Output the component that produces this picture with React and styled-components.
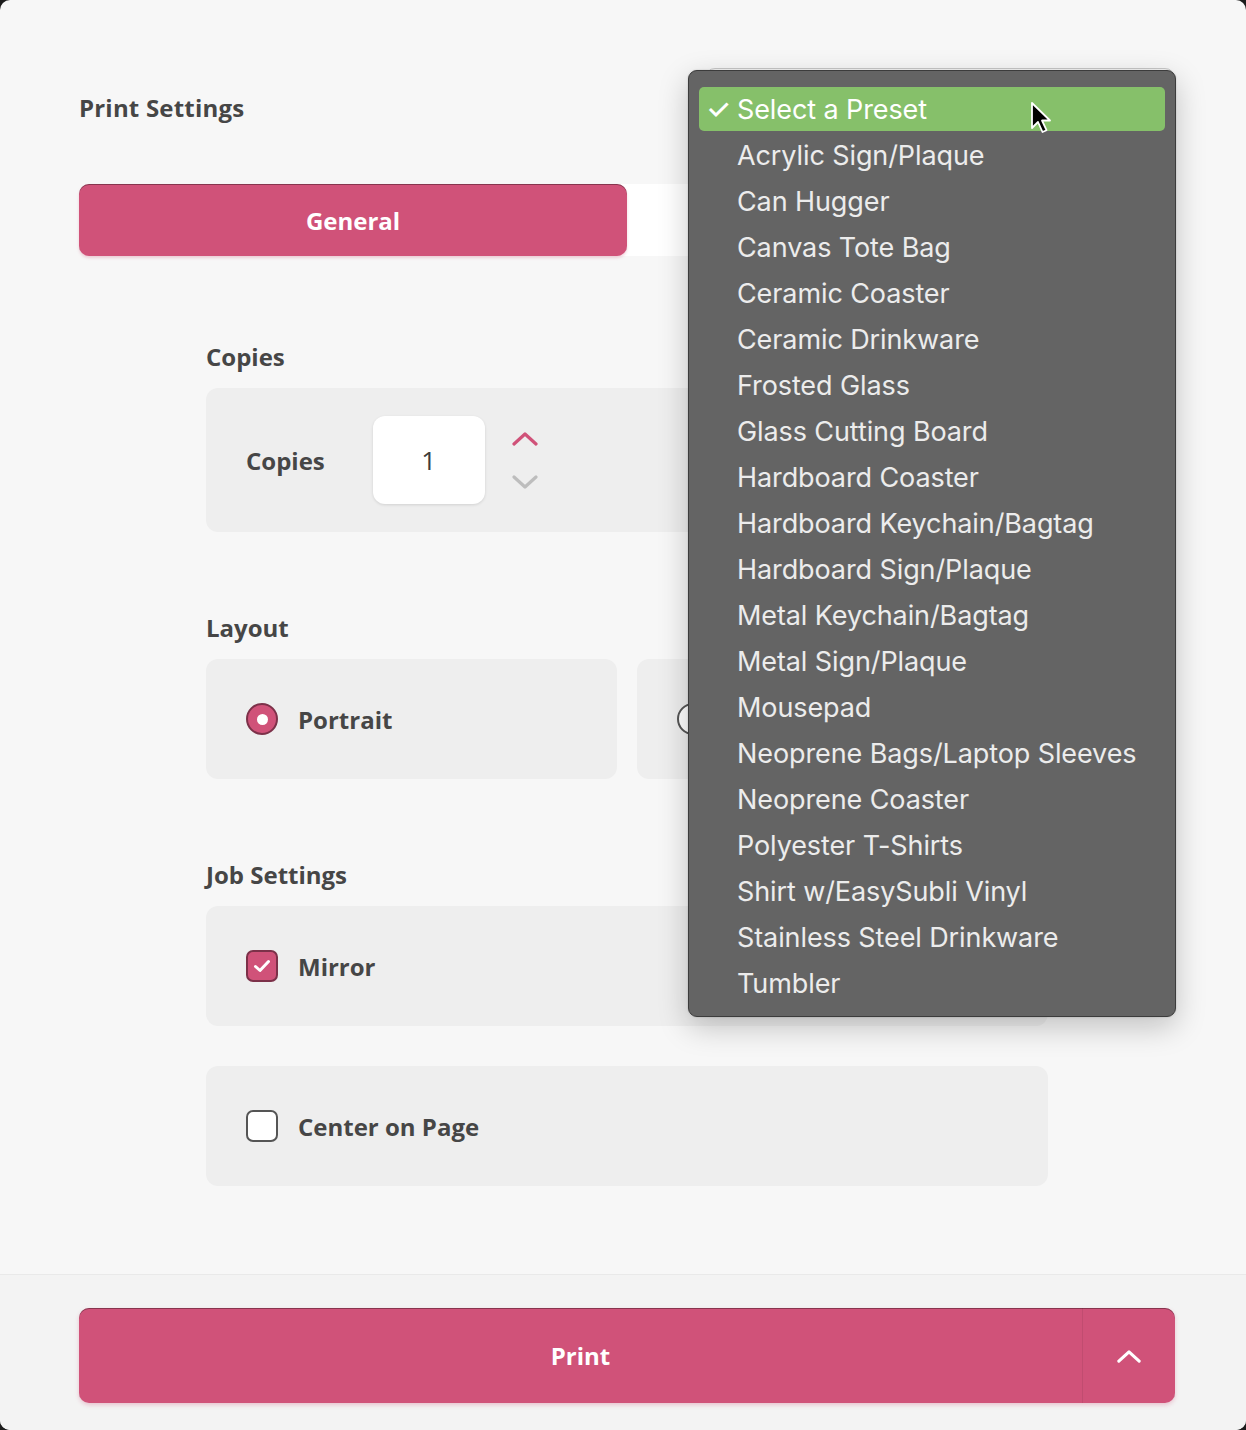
import React from "react";
import styled, { createGlobalStyle } from "styled-components";

const PINK = "#d05279";
const TEXT = "#464646";

const Global = createGlobalStyle`
  html, body { margin: 0; padding: 0; background: #1c1c1c; }
  * { box-sizing: border-box; }
  #root { height: 1430px; }
`;

const Window = styled.div`
  height: 1430px;
  display: flex;
  flex-direction: column;
  background: #f7f7f7;
  border-radius: 10px;
  overflow: hidden;
  font-family: "Open Sans", "Noto Sans", sans-serif;
  color: ${TEXT};
`;

const Main = styled.div`
  flex: 1;
  padding: 68px 71px 0 79px;
  display: flex;
  flex-direction: column;
`;

const HeaderRow = styled.div`
  height: 80px;
  display: flex;
  align-items: center;
  justify-content: space-between;
`;

const Title = styled.h1`
  margin: 0;
  font-size: 24px;
  font-weight: 700;
  line-height: 30px;
  letter-spacing: 0.2px;
  color: ${TEXT};
`;

const SelectWrap = styled.div`
  position: relative;
  width: 470px;
  height: 80px;
  align-self: flex-start;
`;

const SelectBox = styled.div`
  width: 100%;
  height: 100%;
  background: #fff;
  border: 1px solid #c9c9c9;
  border-radius: 10px;
`;

const Menu = styled.ul`
  position: absolute;
  left: -17px;
  top: 2px;
  width: 488px;
  margin: 0;
  padding: 16px 10px 11px;
  list-style: none;
  background: #646464;
  border: 1px solid #3c3c3c;
  border-radius: 9px;
  box-shadow: 0 10px 30px rgba(0, 0, 0, 0.22), 0 0 2px rgba(0, 0, 0, 0.2);
  display: flex;
  flex-direction: column;
  gap: 2px;
  z-index: 10;
`;

const MenuItem = styled.li`
  position: relative;
  height: 44px;
  display: flex;
  align-items: center;
  padding-left: 38px;
  border-radius: 5px;
  font-family: Inter, "Liberation Sans", sans-serif;
  font-size: 27px;
  letter-spacing: -0.1px;
  color: ${(p) => (p.$selected ? "#fff" : "#ececec")};
  background: ${(p) => (p.$selected ? "#86c06a" : "transparent")};
  white-space: nowrap;
`;

const Check = styled.span`
  position: absolute;
  left: 7px;
  top: 50%;
  transform: translateY(-50%);
  font-size: 28px;
  font-weight: 500;
  line-height: 1;
`;

const Cursor = styled.svg`
  position: absolute;
  left: 325px;
  top: 33px;
  z-index: 20;
  pointer-events: none;
`;

const Tabs = styled.div`
  margin-top: 36px;
  height: 72px;
  display: grid;
  grid-template-columns: 1fr 1fr;
  background: #fff;
  border-radius: 10px;
`;

const Tab = styled.div`
  display: flex;
  align-items: center;
  justify-content: center;
  border-radius: 10px;
  font-size: 24px;
  font-weight: 700;
  color: ${(p) => (p.$active ? "#fff" : TEXT)};
  background: ${(p) => (p.$active ? PINK : "transparent")};
  box-shadow: ${(p) =>
    p.$active ? "inset 0 1px 0 rgba(0,0,0,0.35), 0 2px 3px rgba(208,82,121,0.25)" : "none"};
`;

const Content = styled.div`
  width: 842px;
  margin-left: 127px;
  padding-top: 86px;
  display: flex;
  flex-direction: column;
`;

const Section = styled.section`
  display: flex;
  flex-direction: column;
  gap: 40px;
  & + & {
    margin-top: 81px;
  }
`;

const SectionHead = styled.div`
  display: flex;
  flex-direction: column;
  gap: 16px;
`;

const Heading = styled.h2`
  margin: 0;
  font-size: 24px;
  line-height: 30px;
  font-weight: 700;
  color: ${TEXT};
`;

const Card = styled.div`
  height: ${(p) => p.$h || 120}px;
  background: #eeeeee;
  border-radius: 12px;
  display: flex;
  align-items: center;
  padding-left: 40px;
  gap: ${(p) => p.$gap || 20}px;
`;

const CardGrid = styled.div`
  display: grid;
  grid-template-columns: 1fr 1fr;
  gap: 20px;
`;

const Label = styled.span`
  font-size: 24px;
  font-weight: 700;
  color: ${TEXT};
`;

const NumberBox = styled.div`
  width: 112px;
  height: 88px;
  margin-left: 28px;
  background: #fff;
  border-radius: 12px;
  box-shadow: 0 1px 3px rgba(0, 0, 0, 0.12);
  display: flex;
  align-items: center;
  justify-content: center;
  font-family: "Open Sans", sans-serif;
  font-size: 26px;
  color: #3c3c3c;
`;

const Stepper = styled.div`
  display: flex;
  flex-direction: column;
  gap: 29px;
  margin-left: 7px;
`;

const Radio = styled.span`
  width: 32px;
  height: 32px;
  border-radius: 50%;
  flex: none;
  display: flex;
  align-items: center;
  justify-content: center;
  background: ${(p) => (p.$on ? PINK : "#fff")};
  border: 2px solid ${(p) => (p.$on ? "#7c3149" : "#555")};
  &::after {
    content: "";
    width: 11px;
    height: 11px;
    border-radius: 50%;
    background: #fff;
    display: ${(p) => (p.$on ? "block" : "none")};
  }
`;

const Box = styled.span`
  width: 32px;
  height: 32px;
  flex: none;
  border-radius: 7px;
  display: flex;
  align-items: center;
  justify-content: center;
  background: ${(p) => (p.$on ? PINK : "#fff")};
  border: 2px solid ${(p) => (p.$on ? "#7c3149" : "#555")};
`;

const Footer = styled.footer`
  height: 156px;
  border-top: 1px solid #e9e9e9;
  background: #f3f3f3;
  padding: 33px 71px 27px 79px;
`;

const PrintButton = styled.div`
  height: 95px;
  display: flex;
  background: ${PINK};
  border-radius: 10px;
  box-shadow: inset 0 1px 0 rgba(0, 0, 0, 0.35), 0 2px 4px rgba(208, 82, 121, 0.3);
  color: #fff;
`;

const PrintLabel = styled.div`
  flex: 1;
  display: flex;
  align-items: center;
  justify-content: center;
  font-size: 24px;
  font-weight: 700;
`;

const PrintToggle = styled.div`
  width: 93px;
  border-left: 1px solid rgba(0, 0, 0, 0.07);
  display: flex;
  align-items: center;
  justify-content: center;
`;

const presets = [
  "Select a Preset",
  "Acrylic Sign/Plaque",
  "Can Hugger",
  "Canvas Tote Bag",
  "Ceramic Coaster",
  "Ceramic Drinkware",
  "Frosted Glass",
  "Glass Cutting Board",
  "Hardboard Coaster",
  "Hardboard Keychain/Bagtag",
  "Hardboard Sign/Plaque",
  "Metal Keychain/Bagtag",
  "Metal Sign/Plaque",
  "Mousepad",
  "Neoprene Bags/Laptop Sleeves",
  "Neoprene Coaster",
  "Polyester T-Shirts",
  "Shirt w/EasySubli Vinyl",
  "Stainless Steel Drinkware",
  "Tumbler",
];

const Chevron = ({ up, color, w = 26, h = 15, sw = 3.2 }) => (
  <svg width={w} height={h} viewBox="0 0 26 15" fill="none">
    <path
      d={up ? "M2 13 L13 3 L24 13" : "M2 2 L13 12 L24 2"}
      stroke={color}
      strokeWidth={sw}
      strokeLinecap="round"
      strokeLinejoin="round"
    />
  </svg>
);

export default function App() {
  return (
    <>
      <Global />
      <Window>
        <Main>
          <HeaderRow>
            <Title>Print Settings</Title>
            <SelectWrap>
              <SelectBox />
              <Menu>
                {presets.map((p, i) => (
                  <MenuItem key={p} $selected={i === 0}>
                    {i === 0 && <Check>✓</Check>}
                    {p}
                  </MenuItem>
                ))}
              </Menu>
              <Cursor width="24" height="36" viewBox="0 0 24 36">
                <path
                  d="M2 2 L2 27 L8 21 L12.5 31 L16.5 29.2 L12 19.5 L20 19.5 Z"
                  fill="#000"
                  stroke="#fff"
                  strokeWidth="1.8"
                  strokeLinejoin="round"
                />
              </Cursor>
            </SelectWrap>
          </HeaderRow>

          <Tabs>
            <Tab $active>General</Tab>
            <Tab />
          </Tabs>

          <Content>
            <Section>
              <SectionHead>
                <Heading>Copies</Heading>
                <Card $h={144}>
                  <Label>Copies</Label>
                  <NumberBox>1</NumberBox>
                  <Stepper>
                    <Chevron up color={PINK} />
                    <Chevron color="#bdbdbd" />
                  </Stepper>
                </Card>
              </SectionHead>
            </Section>

            <Section>
              <SectionHead>
                <Heading>Layout</Heading>
                <CardGrid>
                  <Card $gap={20}>
                    <Radio $on />
                    <Label>Portrait</Label>
                  </Card>
                  <Card $gap={20}>
                    <Radio />
                  </Card>
                </CardGrid>
              </SectionHead>
            </Section>

            <Section>
              <SectionHead>
                <Heading>Job Settings</Heading>
                <Card $gap={20}>
                  <Box $on>
                    <svg width="18" height="14" viewBox="0 0 18 14" fill="none">
                      <path
                        d="M2.5 7.5 L7 11.5 L15.5 2.5"
                        stroke="#fff"
                        strokeWidth="3"
                        strokeLinecap="round"
                        strokeLinejoin="round"
                      />
                    </svg>
                  </Box>
                  <Label>Mirror</Label>
                </Card>
              </SectionHead>
              <Card $gap={20}>
                <Box />
                <Label>Center on Page</Label>
              </Card>
            </Section>
          </Content>
        </Main>

        <Footer>
          <PrintButton>
            <PrintLabel>Print</PrintLabel>
            <PrintToggle>
              <Chevron up color="#fff" w={24} h={14} sw={3.4} />
            </PrintToggle>
          </PrintButton>
        </Footer>
      </Window>
    </>
  );
}
